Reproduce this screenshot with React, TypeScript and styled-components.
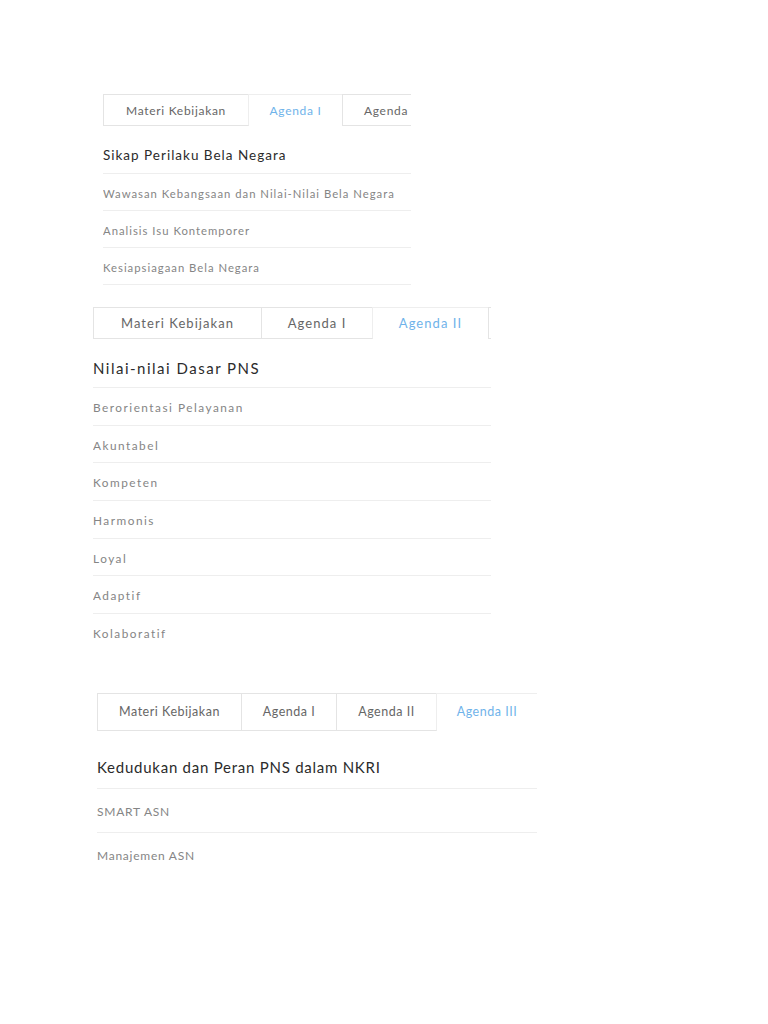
import { FC } from "react";
import styled, { createGlobalStyle } from "styled-components";

interface IPanel {
  left: number;
  gapTop: number;
  width: number;
  tabHeight: number;
  tabFont: number;
  tabs: { label: string; width: number }[];
  active: number;
  title: string;
  titleFont: number;
  titlePadTop: number;
  titleBlock: number;
  itemFont: number;
  rowHeight: number;
  items: string[];
  lastBorder: boolean;
  spacing: number;
}

const panels: IPanel[] = [
  {
    left: 103,
    gapTop: 94,
    width: 308,
    tabHeight: 32,
    tabFont: 12,
    tabs: [
      { label: "Materi Kebijakan", width: 146 },
      { label: "Agenda I", width: 95 },
      { label: "Agenda II", width: 100 },
    ],
    active: 1,
    title: "Sikap Perilaku Bela Negara",
    titleFont: 13.5,
    titlePadTop: 21,
    titleBlock: 48,
    itemFont: 11.3,
    rowHeight: 37,
    items: [
      "Wawasan Kebangsaan dan Nilai-Nilai Bela Negara",
      "Analisis Isu Kontemporer",
      "Kesiapsiagaan Bela Negara",
    ],
    lastBorder: true,
    spacing: 1,
  },
  {
    left: 93,
    gapTop: 22,
    width: 398,
    tabHeight: 32,
    tabFont: 13,
    tabs: [
      { label: "Materi Kebijakan", width: 169 },
      { label: "Agenda I", width: 112 },
      { label: "Agenda II", width: 117 },
      { label: "Agenda III", width: 110 },
    ],
    active: 2,
    title: "Nilai-nilai Dasar PNS",
    titleFont: 15,
    titlePadTop: 20,
    titleBlock: 49,
    itemFont: 11.8,
    rowHeight: 37.7,
    items: [
      "Berorientasi Pelayanan",
      "Akuntabel",
      "Kompeten",
      "Harmonis",
      "Loyal",
      "Adaptif",
      "Kolaboratif",
    ],
    lastBorder: false,
    spacing: 1.5,
  },
  {
    left: 97,
    gapTop: 41,
    width: 440,
    tabHeight: 38,
    tabFont: 12.5,
    tabs: [
      { label: "Materi Kebijakan", width: 145 },
      { label: "Agenda I", width: 96 },
      { label: "Agenda II", width: 101 },
      { label: "Agenda III", width: 102 },
    ],
    active: 3,
    title: "Kedudukan dan Peran PNS dalam NKRI",
    titleFont: 15,
    titlePadTop: 27,
    titleBlock: 58,
    itemFont: 12,
    rowHeight: 44,
    items: ["SMART ASN", "Manajemen ASN"],
    lastBorder: false,
    spacing: 0.75,
  },
];

const GlobalStyle = createGlobalStyle`
  body {
    margin: 0;
    background: #ffffff;
    font-family: Lato, "Noto Sans", sans-serif;
  }
`;

const Page = styled.div`
  display: flex;
  flex-direction: column;
  align-items: flex-start;
  min-height: 1024px;
`;

const StyledPanel = styled.section<{ $left: number; $top: number; $width: number }>`
  margin-left: ${(p) => p.$left}px;
  margin-top: ${(p) => p.$top}px;
  width: ${(p) => p.$width}px;
  overflow: hidden;
`;

const StyledTabs = styled.ul<{ $height: number }>`
  display: flex;
  list-style: none;
  margin: 0;
  padding: 0;
  height: ${(p) => p.$height}px;
`;

const StyledTab = styled.li<{ $width: number; $active: boolean; $font: number; $spacing: number }>`
  flex: 0 0 ${(p) => p.$width}px;
  box-sizing: border-box;
  display: flex;
  align-items: center;
  justify-content: center;
  border: 1px solid ${(p) => (p.$active ? "#eeeeee" : "#e4e4e4")};
  border-bottom-color: ${(p) => (p.$active ? "transparent" : "#e4e4e4")};
  margin-left: -1px;
  &:first-child {
    margin-left: 0;
  }
  font-size: ${(p) => p.$font}px;
  letter-spacing: ${(p) => p.$spacing}px;
  color: ${(p) => (p.$active ? "#6fb3ea" : "#666666")};
  white-space: nowrap;
`;

const StyledTitle = styled.h3<{ $font: number; $pad: number; $block: number; $spacing: number }>`
  margin: 0;
  box-sizing: border-box;
  height: ${(p) => p.$block}px;
  padding-top: ${(p) => p.$pad}px;
  font-size: ${(p) => p.$font}px;
  line-height: ${(p) => p.$font + 4}px;
  font-weight: 400;
  letter-spacing: ${(p) => p.$spacing}px;
  color: #2b2b2b;
  border-bottom: 1px solid #eeeeee;
`;

const StyledList = styled.ul`
  list-style: none;
  margin: 0;
  padding: 0;
`;

const StyledItem = styled.li<{ $height: number; $font: number; $last: boolean; $spacing: number }>`
  box-sizing: border-box;
  height: ${(p) => p.$height}px;
  display: flex;
  align-items: center;
  padding-top: 2px;
  font-size: ${(p) => p.$font}px;
  letter-spacing: ${(p) => p.$spacing}px;
  color: #858585;
  border-bottom: 1px solid ${(p) => (p.$last ? "#eeeeee" : "transparent")};
  &:not(:last-child) {
    border-bottom-color: #eeeeee;
  }
`;

const Panel: FC<{ data: IPanel }> = ({ data }) => {
  const renderItems = (): JSX.Element[] =>
    data.items.map((item) => (
      <StyledItem
        key={item}
        $height={data.rowHeight}
        $font={data.itemFont}
        $last={data.lastBorder}
        $spacing={data.spacing}
      >
        {item}
      </StyledItem>
    ));

  return (
    <StyledPanel $left={data.left} $top={data.gapTop} $width={data.width}>
      <StyledTabs $height={data.tabHeight}>
        {data.tabs.map((tab, i) => (
          <StyledTab
            key={tab.label}
            $width={tab.width}
            $active={i === data.active}
            $font={data.tabFont}
            $spacing={data.spacing * 0.7}
          >
            {tab.label}
          </StyledTab>
        ))}
      </StyledTabs>
      <StyledTitle
        $font={data.titleFont}
        $pad={data.titlePadTop}
        $block={data.titleBlock}
        $spacing={data.spacing}
      >
        {data.title}
      </StyledTitle>
      <StyledList>{renderItems()}</StyledList>
    </StyledPanel>
  );
};

const App: FC = () => (
  <>
    <GlobalStyle />
    <Page>
      {panels.map((p) => (
        <Panel key={p.title} data={p} />
      ))}
    </Page>
  </>
);

export default App;
